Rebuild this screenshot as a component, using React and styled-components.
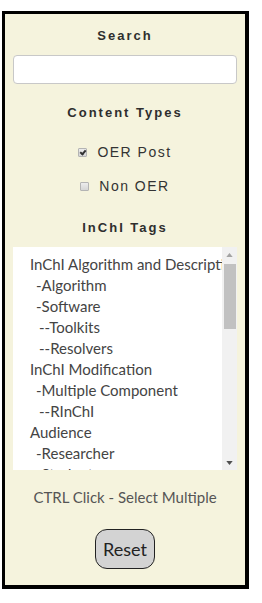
import styled, { createGlobalStyle } from 'styled-components';

const GlobalStyle = createGlobalStyle`
    html, body {
        margin: 0;
        padding: 0;
        background: #ffffff;
    }
`;

const tags = [
    { label: 'InChI Algorithm and Description', level: 0 },
    { label: '-Algorithm', level: 1 },
    { label: '-Software', level: 1 },
    { label: '--Toolkits', level: 2 },
    { label: '--Resolvers', level: 2 },
    { label: 'InChI Modification', level: 0 },
    { label: '-Multiple Component', level: 1 },
    { label: '--RInChI', level: 2 },
    { label: 'Audience', level: 0 },
    { label: '-Researcher', level: 1 },
    { label: '-Student', level: 1 },
];

const App = () => {
    return (
        <>
            <GlobalStyle />
            <Panel>
                <Heading>Search</Heading>
                <SearchInput type="text" />
                <Heading $top={21}>Content Types</Heading>
                <CheckRow $top={22}>
                    <Box $checked />
                    <CheckLabel>OER Post</CheckLabel>
                </CheckRow>
                <CheckRow $top={16}>
                    <Box />
                    <CheckLabel>Non OER</CheckLabel>
                </CheckRow>
                <Heading $top={25}>InChI Tags</Heading>
                <ListBox>
                    <Options>
                        {tags.map((t) => (
                            <Option key={t.label} $level={t.level}>{t.label}</Option>
                        ))}
                    </Options>
                    <ScrollBar>
                        <ScrollButton>
                            <Arrow viewBox="0 0 8 5" $disabled><path d="M4 0 L8 5 L0 5 Z" /></Arrow>
                        </ScrollButton>
                        <Track>
                            <Thumb />
                        </Track>
                        <ScrollButton>
                            <Arrow viewBox="0 0 8 5"><path d="M0 0 L8 0 L4 5 Z" /></Arrow>
                        </ScrollButton>
                    </ScrollBar>
                </ListBox>
                <Hint>CTRL Click - Select Multiple</Hint>
                <ResetButton>Reset</ResetButton>
            </Panel>
        </>
    );
};

export default App;

const Panel = styled.div`
    box-sizing: border-box;
    width: 247px;
    margin: 11px 0 0 2px;
    border: 3px solid #000;
    border-right-width: 4px;
    border-bottom-width: 4px;
    background-color: #f5f3dd;
    padding: 14px 8px 16px 8px;
    display: flex;
    flex-direction: column;
    align-items: center;
`;

const Heading = styled.div`
    margin-top: ${(p) => p.$top || 0}px;
    font-family: "Liberation Sans", Arial, sans-serif;
    font-weight: bold;
    font-size: 13px;
    line-height: 16px;
    letter-spacing: 2px;
    color: #2e2e2e;
    text-align: center;
`;

const SearchInput = styled.input`
    box-sizing: border-box;
    margin-top: 11px;
    width: 100%;
    height: 29px;
    border: 1px solid #c8c8c8;
    border-radius: 4px;
    background: #fff;
    outline: none;
`;

const CheckRow = styled.label`
    margin-top: ${(p) => p.$top}px;
    display: flex;
    align-items: center;
    gap: 10px;
    height: 18px;
`;

const Box = styled.span`
    position: relative;
    box-sizing: border-box;
    width: 9px;
    height: 9px;
    border: 1px solid #b4b4b4;
    border-radius: 1px;
    background: linear-gradient(#ececec, #d6d6d6);

    &::after {
        content: '';
        display: ${(p) => (p.$checked ? 'block' : 'none')};
        position: absolute;
        left: 2px;
        top: 0px;
        width: 2px;
        height: 4px;
        border: solid #333;
        border-width: 0 2px 2px 0;
        transform: rotate(40deg);
    }
`;

const CheckLabel = styled.span`
    font-family: "Liberation Sans", Arial, sans-serif;
    font-size: 14px;
    letter-spacing: 1.5px;
    color: #333;
`;

const ListBox = styled.div`
    margin-top: 11px;
    width: 100%;
    height: 223px;
    background: #fff;
    display: flex;
    overflow: hidden;
`;

const Options = styled.div`
    flex: 1;
    min-width: 0;
    padding: 7px 0 0 17px;
    overflow: hidden;
`;

const Option = styled.div`
    padding-left: ${(p) => [0, 6, 9][p.$level]}px;
    font-family: Lato, "Open Sans", sans-serif;
    font-size: 15px;
    line-height: 21px;
    color: #444;
    white-space: nowrap;
`;

const ScrollBar = styled.div`
    width: 15px;
    flex-shrink: 0;
    background: #f1f1f1;
    display: flex;
    flex-direction: column;
`;

const ScrollButton = styled.div`
    height: 15px;
    display: flex;
    align-items: center;
    justify-content: center;
`;

const Arrow = styled.svg`
    width: 7px;
    height: 4px;
    fill: ${(p) => (p.$disabled ? '#a3a3a3' : '#505050')};
`;

const Track = styled.div`
    flex: 1;
    padding: 2px 1px 0 2px;
`;

const Thumb = styled.div`
    height: 65px;
    background: #c1c1c1;
`;

const Hint = styled.div`
    margin-top: 17px;
    font-family: Lato, "Open Sans", sans-serif;
    font-size: 15px;
    line-height: 20px;
    color: #555;
`;

const ResetButton = styled.button`
    margin-top: 22px;
    width: 60px;
    height: 40px;
    padding: 0;
    border: 1px solid #222;
    border-radius: 12px;
    background: #d3d3d3;
    font-family: Lato, "Open Sans", sans-serif;
    font-size: 18px;
    color: #222;
    cursor: pointer;
`;
